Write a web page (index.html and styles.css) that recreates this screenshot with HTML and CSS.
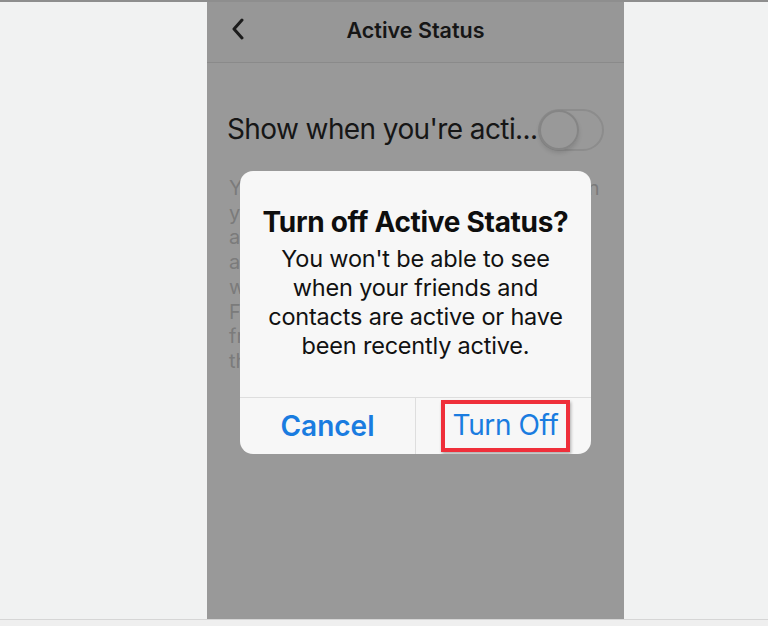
FILE: index.html
```html
<!DOCTYPE html>
<html lang="en">
<head>
    <meta charset="UTF-8">
    <meta name="viewport" content="width=device-width, initial-scale=1.0">
    <title>Active Status</title>
    <link rel="stylesheet" href="styles.css">
</head>
<body>
    <div class="stage">
        <div class="gutter"></div>

        <!-- Phone screen, dimmed behind the alert -->
        <div class="phone">
            <header class="topbar">
                <svg class="back" width="14" height="22" viewBox="0 0 14 22">
                    <path d="M11 2 L3 11 L11 20" fill="none" stroke="#1c1c1c" stroke-width="3" stroke-linecap="round" stroke-linejoin="round"/>
                </svg>
                <h1>Active Status</h1>
            </header>

            <div class="setting">
                <span class="label">Show when you're acti...</span>
                <div class="toggle"><div class="knob"></div></div>
            </div>

            <div class="info">
                <div class="first">Your friends and contacts will see when</div>
                <div>you're active or recently active on</div>
                <div>are active or recently active.</div>
                <div>and you'll see the same.</div>
                <div>when they're active too.</div>
                <div>Facebook friends may see</div>
                <div>from you on Messenger.</div>
                <div>this setting</div>
            </div>

            <!-- Alert -->
            <div class="alert">
                <div class="alert-body">
                    <h2>Turn off Active Status?</h2>
                    <p>You won't be able to see<br>when your friends and<br>contacts are active or have<br>been recently active.</p>
                </div>
                <div class="alert-actions">
                    <div class="action cancel">Cancel</div>
                    <div class="action confirm"><span class="highlight">Turn Off</span></div>
                </div>
            </div>
        </div>

        <div class="gutter"></div>
    </div>
    <div class="footer-strip"></div>
</body>
</html>
```

FILE: styles.css
```css
body {
    margin: 0;
    background-color: #f1f2f2;
    font-family: Inter, "Open Sans", Arial, sans-serif;
    border-top: 2px solid #8e8e8e;
    height: 624px;
    overflow: hidden;
}

.stage {
    display: flex;
    height: 617px;
}
.gutter {
    flex: 1;
}
.gutter:first-child {
    flex: 0 0 207px;
}

/* Phone */
.phone {
    position: relative;
    width: 417px;
    background-color: #999;
    overflow: hidden;
}
.topbar {
    height: 56px;
    padding-bottom: 4px;
    display: flex;
    align-items: center;
    justify-content: center;
    position: relative;
    border-bottom: 1px solid #8a8a8a;
    background-color: #979797;
}
.back {
    position: absolute;
    left: 24px;
    top: 16px;
}
.topbar h1 {
    margin: 0;
    font-size: 21.5px;
    font-weight: 600;
    color: #161616;
}

.setting {
    display: flex;
    align-items: center;
    justify-content: space-between;
    padding: 44px 20px 0 20px;
    height: 44px;
}
.label {
    font-size: 28px;
    color: #161616;
    letter-spacing: -0.6px;
    white-space: nowrap;
}
.toggle {
    position: relative;
    width: 62px;
    height: 38px;
    border: 2px solid #8c8c8c;
    border-radius: 21px;
    margin-top: 2px;
}
.knob {
    position: absolute;
    left: -1px;
    top: -1px;
    width: 36px;
    height: 36px;
    border: 2px solid #858585;
    border-radius: 50%;
    box-shadow: 0 3px 4px rgba(0, 0, 0, 0.12);
}

.info {
    padding: 25px 20px 0 22px;
    font-size: 20px;
    line-height: 24.7px;
    color: #7b7b7b;
    white-space: nowrap;
}
.info .first {
    letter-spacing: -0.16px;
}

/* Alert */
.alert {
    position: absolute;
    left: 33px;
    top: 169px;
    width: 351px;
    height: 283px;
    background-color: #f7f7f7;
    border-radius: 13px;
    display: flex;
    flex-direction: column;
    overflow: hidden;
}
.alert-body {
    flex: 1;
    text-align: center;
    padding-top: 35px;
    border-bottom: 1px solid #dedede;
}
.alert-body h2 {
    margin: 0;
    font-size: 28px;
    line-height: 32px;
    font-weight: 700;
    color: #0e0e0e;
    letter-spacing: -0.3px;
}
.alert-body p {
    margin: 6px 0 0;
    font-size: 23.5px;
    line-height: 29px;
    color: #111;
    letter-spacing: -0.2px;
}
.alert-actions {
    height: 56px;
    display: flex;
}
.action {
    flex: 1;
    display: flex;
    align-items: center;
    justify-content: center;
    font-size: 28px;
    color: #1a7ce0;
}
.cancel {
    font-weight: 600;
    border-right: 1px solid #dedede;
}
.highlight {
    padding: 4px 8px 6px;
    border: 4px solid #ef2f3a;
    box-shadow: 1px 2px 3px rgba(0, 0, 0, 0.3);
    letter-spacing: -0.4px;
    margin-left: 4px;
}

.footer-strip {
    border-top: 1px solid #d6d6d6;
    height: 6px;
    background-color: #efefef;
}
```
